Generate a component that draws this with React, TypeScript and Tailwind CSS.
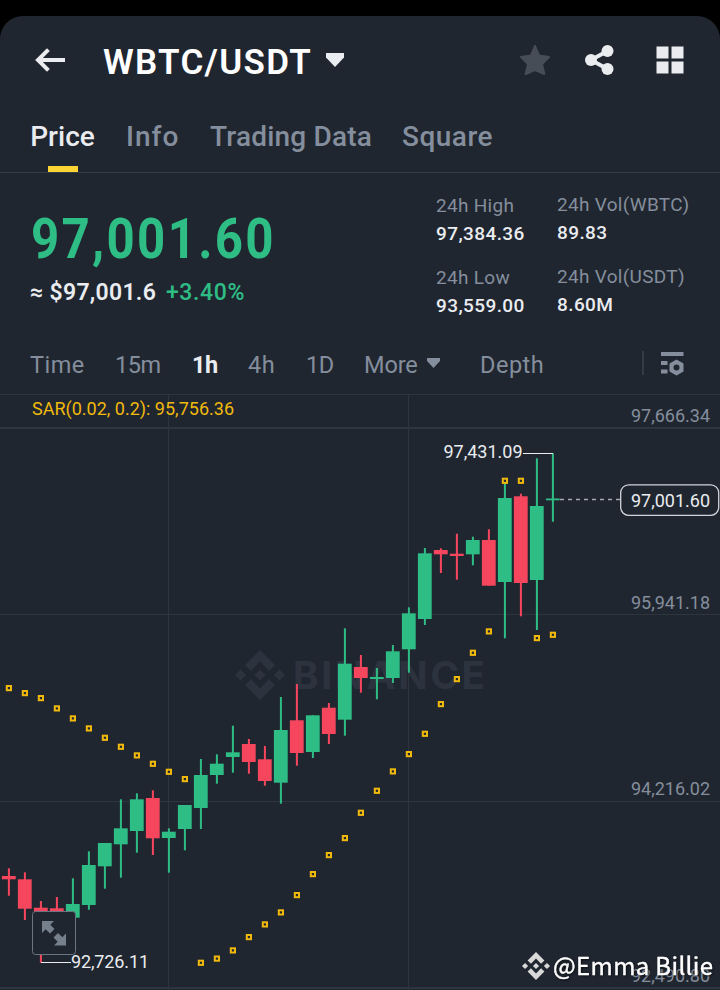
import React from 'react';

type Candle = [high: number, top: number, bottom: number, low: number, up: 0 | 1];

const STEP = 16;
const START = 8.8;

// high, body top, body bottom, low, direction
const candles: Candle[] = [
  [868.3, 876, 879.3, 895.7, 0],
  [872.3, 879.3, 908.7, 920, 0],
  [901, 907.7, 913, 962.7, 0],
  [897, 908.3, 913, 913, 0],
  [878.3, 904, 917.7, 917.7, 1],
  [851.3, 865, 905, 909.7, 1],
  [843, 843, 866.3, 888.7, 1],
  [799.3, 828.3, 844.3, 877.7, 1],
  [793.3, 799.3, 831, 852.7, 1],
  [790.3, 798, 838.3, 855, 0],
  [828.3, 831.7, 838, 872.7, 1],
  [805, 805, 829, 850.3, 1],
  [759, 775, 808, 829, 1],
  [754.3, 763.7, 775, 783.7, 1],
  [725.7, 752.3, 757, 772.7, 1],
  [739, 744, 762, 773.7, 0],
  [746, 759.3, 781, 785.7, 0],
  [697, 730, 782.7, 803.7, 1],
  [684, 720.3, 753, 765.7, 0],
  [715.3, 715.3, 752, 758, 1],
  [703, 707.7, 734, 744, 0],
  [628.3, 663.7, 719.7, 735.7, 1],
  [655, 667, 678, 692.7, 0],
  [668, 677, 679, 699.3, 1],
  [645, 651.3, 678, 683, 1],
  [607.3, 613.3, 649.3, 672.7, 1],
  [548, 553.3, 619, 625, 1],
  [548.3, 550, 554.3, 573, 0],
  [533.7, 553.7, 556, 579.7, 0],
  [536.7, 540, 554.3, 565.3, 1],
  [529.3, 540, 585.7, 585.7, 0],
  [482, 498, 582, 638.3, 1],
  [493.7, 496.3, 583, 616.3, 0],
  [458.3, 506, 580, 630, 1],
  [453.3, 498.5, 500.3, 521.7, 1],
];

const sar = [
  688, 693, 698, 708.3, 718.3, 728.3, 737.7, 746.7, 755.3, 763.7, 771.7, 779, 962.7, 958.5, 950.3, 937, 924.3, 912.3,
  895, 874, 855, 838, 812.7, 790.7, 771.3, 754, 733.7, 704, 679, 652.7, 631.3, 480.7, 480.7, 638, 634.7,
];

const axisLabels = [
  { y: 421.5, text: '97,666.34' },
  { y: 608.5, text: '95,941.18' },
  { y: 795, text: '94,216.02' },
  { y: 981.5, text: '92,490.80' },
];

function BinanceMark() {
  return (
    <>
      <path d="M25 0 40 15 34 21 25 11.5 16 21 10 15Z" />
      <path d="M25 50 40 35 34 29 25 38.5 16 29 10 35Z" />
      <path d="M25 19.5 30.5 25 25 30.5 19.5 25Z" />
      <path d="M5.5 19.5 11 25 5.5 30.5 0 25Z" />
      <path d="M44.5 19.5 50 25 44.5 30.5 39 25Z" />
    </>
  );
}

function Header() {
  return (
    <header className="flex h-[88px] items-center pl-[35px] pr-9">
      <svg width="31" height="24" viewBox="0 0 31 24" fill="none" stroke="#eaecef" strokeWidth="4">
        <path d="M13.4 1.6 3 12 13.4 22.4M3 12H30" />
      </svg>
      <h1 className="ml-[37px] mt-1 w-[207px] whitespace-nowrap text-[35px] font-semibold leading-none tracking-[1.3px] text-white">
        WBTC/USDT
      </h1>
      <svg className="ml-4" width="18" height="14" viewBox="0 0 18 14" fill="#eaecef">
        <path d="M0 0H18V4.5L9 14 0 4.5Z" />
      </svg>
      <div className="ml-auto flex items-center">
        <svg width="30" height="30" viewBox="0 0 30 30" fill="#474d57" stroke="#474d57" strokeWidth="2" strokeLinejoin="round">
          <path d="M15 1 19 10.5 29 12 22 19 24.3 29 15 25 5.7 29 8 19 1 12 11 10.5Z" />
        </svg>
        <svg className="ml-[35px]" width="29" height="30" viewBox="0 0 29 30" fill="#eaecef">
          <path d="M22.5 6 6 15 22.5 24" fill="none" stroke="#eaecef" strokeWidth="4" />
          <circle cx="6" cy="15" r="6" />
          <circle cx="22.5" cy="6" r="6" />
          <circle cx="22.5" cy="24" r="6" />
        </svg>
        <svg className="ml-[42px]" width="28" height="28" viewBox="0 0 28 28" fill="#eaecef">
          <path d="M.5.5h12v12H.5zM15.5.5h12v12h-12zM.5 15.5h12v12H.5zM15.5 15.5h12v12h-12z" />
        </svg>
      </div>
    </header>
  );
}

function Tabs() {
  return (
    <nav className="flex h-[69px] gap-[31px] border-b border-[#333b47] pl-[30px] text-[28px] font-medium leading-[66px] text-[#848e9c]">
      <div className="flex w-[65px] flex-col items-center whitespace-nowrap text-[#eaecef]">
        <span className="h-[62px]">Price</span>
        <span className="h-1.5 w-[30px] bg-[#fcd535]" />
      </div>
      <span className="w-[53px] whitespace-nowrap tracking-[1px]">Info</span>
      <span className="w-[161px] whitespace-nowrap tracking-[0.2px]">Trading Data</span>
      <span className="whitespace-nowrap tracking-[0.5px]">Square</span>
    </nav>
  );
}

function Stat({ label, value }: { label: string; value: string }) {
  return (
    <div className="h-[72px] whitespace-nowrap">
      <div className="text-[19px] leading-7 tracking-[0.3px] text-[#848e9c]">{label}</div>
      <div className="text-[19px] font-medium leading-7 tracking-[0.4px] text-[#eaecef]">{value}</div>
    </div>
  );
}

function Ticker() {
  return (
    <section className="flex h-[163px]">
      <div className="w-[436px] pl-[30px] pt-8">
        <div className="ml-px origin-left scale-x-[0.88] whitespace-nowrap text-[56px] font-bold leading-[68px] tracking-[2.6px] text-[#2ebd85]">
          97,001.60
        </div>
        <div className="mt-1.5 flex whitespace-nowrap text-[23px] font-semibold leading-7 tracking-[0.3px]">
          <span className="w-[136px] text-[#eaecef]">≈ $97,001.6</span>
          <span className="font-medium tracking-[0.6px] text-[#2ebd85]">+3.40%</span>
        </div>
      </div>
      <div className="w-[121px] pt-[19px]">
        <Stat label="24h High" value="97,384.36" />
        <Stat label="24h Low" value="93,559.00" />
      </div>
      <div className="pt-[18px]">
        <Stat label="24h Vol(WBTC)" value="89.83" />
        <Stat label="24h Vol(USDT)" value="8.60M" />
      </div>
    </section>
  );
}

function Intervals() {
  return (
    <div className="flex h-[58px] items-center whitespace-nowrap pl-[30px] text-[23.5px] tracking-[0.5px] text-[#848e9c]">
      <span className="mt-0.5 w-[85px]">Time</span>
      <span className="mt-0.5 w-[77px] tracking-[-0.4px]">15m</span>
      <span className="mt-0.5 w-[56px] font-bold tracking-[-0.6px] text-[#eaecef]">1h</span>
      <span className="mt-0.5 w-[58px]">4h</span>
      <span className="mt-0.5 w-[58px] tracking-[-0.4px]">1D</span>
      <span className="mt-0.5 w-[63px] tracking-[-0.1px]">More</span>
      <svg className="-mt-1" width="13" height="10" viewBox="0 0 13 10" fill="#848e9c">
        <path d="M0 0H13V3L6.5 10 0 3Z" />
      </svg>
      <span className="ml-10 mt-0.5 w-[162px]">Depth</span>
      <span className="-mt-1 h-6 w-0.5 bg-[#333b47]" />
      <svg className="-mt-1 ml-4" width="25" height="25" viewBox="0 0 25 25" fill="#848e9c">
        <path d="M1 1h22.5v4H1zM1 10h6.5v4H1zM1 18.5h6.5v4H1z" />
        <path
          fillRule="evenodd"
          d="M16.5 8.5 23.5 12.5V20.5L16.5 24.5 9.5 20.5V12.5ZM16.5 13.5a3 3 0 1 0 0 6 3 3 0 0 0 0-6Z"
        />
      </svg>
    </div>
  );
}

function Chart() {
  return (
    <svg className="block font-[Roboto,sans-serif]" width="720" height="596" viewBox="0 394 720 596" fontSize="18">
      <g fill="#2d333e">
        <g transform="translate(235 650)">
          <BinanceMark />
        </g>
        <text x="293" y="689" fontFamily="Inter, sans-serif" fontSize="38.5" fontWeight="700" textLength="192">
          BINANCE
        </text>
      </g>
      <g fill="#2e353f">
        <rect x="0" y="393" width="720" height="2" />
        <rect x="0" y="427" width="720" height="2" />
        <rect x="0" y="614" width="720" height="1" />
        <rect x="0" y="801" width="720" height="1" />
        <rect x="0" y="987" width="720" height="2" />
        <rect x="168" y="395" width="1" height="595" />
        <rect x="408" y="395" width="1" height="595" />
      </g>

      {candles.map(([high, top, bottom, low, up], i) => {
        const x = START + i * STEP;
        return (
          <g key={i} fill={up ? '#2ebd85' : '#f6465d'}>
            <rect x={x - 0.9} y={high} width="2" height={low - high} />
            <rect x={x - 6.9} y={top} width="13.8" height={bottom - top} />
          </g>
        );
      })}

      {sar.map((y, i) => (
        <rect
          key={i}
          x={START + i * STEP - 2}
          y={y - 2}
          width="4.2"
          height="4.2"
          fill="#202630"
          stroke="#f0b90b"
          strokeWidth="2"
        />
      ))}

      <text x="32" y="415" fill="#f0b90b" textLength="202">
        SAR(0.02, 0.2): 95,756.36
      </text>
      <g fill="#848e9c">
        {axisLabels.map((label) => (
          <text key={label.text} x="631" y={label.y} textLength="79">
            {label.text}
          </text>
        ))}
      </g>

      {/* highest and lowest price */}
      <g fill="#eaecef">
        <rect x="523" y="453" width="30" height="1" />
        <text x="443.5" y="458" textLength="79">
          97,431.09
        </text>
        <rect x="41" y="962" width="30" height="1" />
        <text x="71" y="968" textLength="78">
          92,726.11
        </text>
      </g>

      {/* last price */}
      <path d="M560 499.5H620" stroke="#a3a9b3" strokeWidth="1.5" strokeDasharray="4 4" />
      <rect x="620.7" y="484.8" width="98" height="30.5" rx="8" fill="#202630" stroke="#d0d4da" strokeWidth="1.3" />
      <text x="631" y="507" fill="#eaecef" textLength="79">
        97,001.60
      </text>

      {/* fullscreen button */}
      <rect x="32.5" y="911.5" width="43" height="43" rx="3" fill="#202630" stroke="#6b7481" />
      <g fill="#76808d">
        <path d="M42 921H54L50.3 924.7 54.5 929 50 933.5 45.7 929.3 42 933Z" />
        <path d="M66 945.5H54L57.7 941.8 53.5 937.5 58 933 62.3 937.2 66 933.5Z" />
      </g>

      <g fill="#d9d9d9" transform="translate(522 952) scale(.56)">
        <BinanceMark />
      </g>
      <text
        className="drop-shadow-[1px_1px_1px_rgba(0,0,0,0.6)]"
        x="553"
        y="975"
        fill="#fff"
        stroke="#fff"
        strokeWidth="0.4"
        fontFamily="'Noto Sans CJK SC', 'Noto Sans', sans-serif"
        fontSize="24"
        textLength="160"
      >
        @Emma Billie
      </text>
    </svg>
  );
}

export default function App() {
  return (
    <div className="h-[990px] w-[720px] overflow-hidden bg-black pt-4 font-[Roboto,sans-serif]">
      <main className="rounded-t-[23px] bg-[#202630]">
        <Header />
        <Tabs />
        <Ticker />
        <Intervals />
        <Chart />
      </main>
    </div>
  );
}
